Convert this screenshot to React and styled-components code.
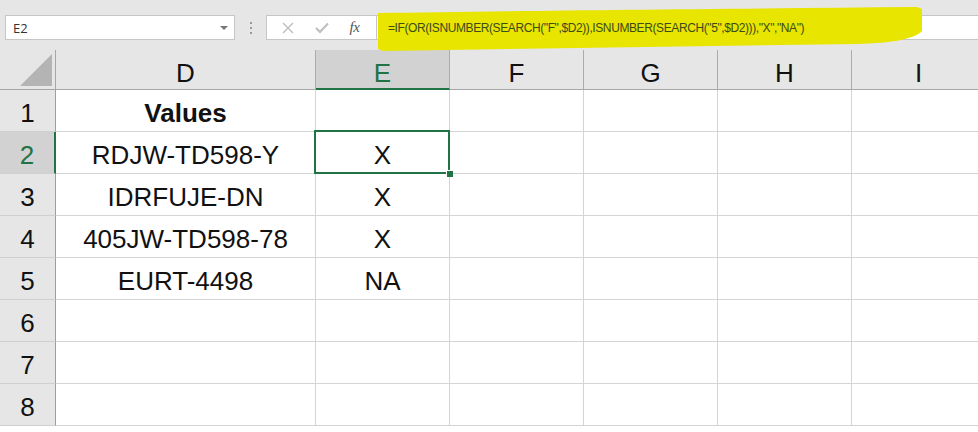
import React from "react";
import styled, { createGlobalStyle, css } from "styled-components";

const GREEN = "#217346";

const Global = createGlobalStyle`
  html, body { margin: 0; padding: 0; background: #fff; }
  body { font-family: "Liberation Sans", Arial, sans-serif; overflow: hidden; }
  * { box-sizing: border-box; }
`;

const Frame = styled.div`
  position: relative;
  width: 978px;
  height: 432px;
  overflow: hidden;
  background: #fff;
`;

const TopBar = styled.div`
  position: relative;
  z-index: 5;
  height: 50px;
  background: #e6e6e6;
  display: flex;
  align-items: flex-start;
  padding: 15px 0 0 5px;
`;

const NameBox = styled.div`
  width: 230px;
  height: 25px;
  background: #fff;
  border: 1px solid #c6c6c6;
  display: flex;
  align-items: center;
  justify-content: space-between;
  padding: 0 6px 0 7px;
  font-family: "Open Sans", "Noto Sans", sans-serif;
  font-size: 13px;
  color: #333;
`;

const Caret = styled.span`
  width: 0;
  height: 0;
  border-left: 4px solid transparent;
  border-right: 4px solid transparent;
  border-top: 4px solid #777;
`;

const Dots = styled.div`
  width: 31px;
  height: 25px;
  display: flex;
  flex-direction: column;
  align-items: center;
  justify-content: center;
  gap: 3px;
  & > span {
    width: 2px;
    height: 2px;
    background: #9a9a9a;
  }
`;

const FxBox = styled.div`
  width: 110px;
  height: 25px;
  background: #fff;
  border: 1px solid #c6c6c6;
  border-right: none;
  display: flex;
  align-items: center;
  justify-content: space-around;
  padding: 0 6px 0 4px;
`;

const FxLabel = styled.span`
  font-family: "Liberation Serif", "Times New Roman", serif;
  font-style: italic;
  font-size: 15px;
  color: #555;
  letter-spacing: -0.5px;
`;

const FormulaInput = styled.div`
  flex: 1;
  height: 25px;
  background: #fff;
  border-top: 1px solid #c6c6c6;
  border-bottom: 1px solid #c6c6c6;
  border-left: 1px solid #c6c6c6;
  display: flex;
  align-items: center;
  padding-left: 11px;
  font-family: "Liberation Sans", Arial, sans-serif;
  font-size: 12px;
  letter-spacing: -0.4px;
  color: #3d4a1a;
  white-space: nowrap;
  position: relative;
`;

const FormulaText = styled.span`
  position: relative;
  z-index: 2;
`;

const Highlight = styled.svg`
  position: absolute;
  left: 0;
  top: -16px;
  z-index: 1;
  pointer-events: none;
  overflow: visible;
`;

const Sheet = styled.div`
  display: grid;
  grid-template-columns: 56px 260px repeat(5, 134px);
  grid-template-rows: 40px repeat(8, 42px);
  width: 986px;
`;

const cellText = css`
  font-family: "Liberation Sans", Arial, sans-serif;
  font-size: 26px;
  line-height: 26px;
  display: flex;
  align-items: flex-end;
  justify-content: center;
`;

const Corner = styled.div`
  background: #e6e6e6;
  border-right: 1px solid #a6a6a6;
  border-bottom: 1px solid #a6a6a6;
  position: relative;
  &::after {
    content: "";
    position: absolute;
    right: 3px;
    bottom: 3px;
    width: 0;
    height: 0;
    border-left: 32px solid transparent;
    border-bottom: 32px solid #b4b4b4;
  }
`;

const ColHead = styled.div`
  ${cellText}
  background: ${(p) => (p.$active ? "#d2d2d2" : "#e6e6e6")};
  color: ${(p) => (p.$active ? GREEN : "#111")};
  border-right: 1px solid #ababab;
  border-bottom: ${(p) => (p.$active ? `2px solid ${GREEN}` : "1px solid #a6a6a6")};
  padding-bottom: ${(p) => (p.$active ? "2px" : "3px")};
`;

const RowHead = styled.div`
  ${cellText}
  padding-bottom: 5px;
  background: ${(p) => (p.$active ? "#d2d2d2" : "#e6e6e6")};
  color: ${(p) => (p.$active ? GREEN : "#111")};
  border-bottom: 1px solid #cfcfcf;
  border-right: ${(p) => (p.$active ? `2px solid ${GREEN}` : "1px solid #9e9e9e")};
`;

const Cell = styled.div`
  ${cellText}
  padding-bottom: 5px;
  color: #111;
  font-weight: ${(p) => (p.$bold ? 700 : 400)};
  border-right: 1px solid #d4d4d4;
  border-bottom: 1px solid #d4d4d4;
  position: relative;
  ${(p) =>
    p.$selected &&
    css`
      &::before {
        content: "";
        position: absolute;
        left: -2px;
        top: -2px;
        right: -1px;
        bottom: -1px;
        border: 2px solid ${GREEN};
        z-index: 2;
      }
      &::after {
        content: "";
        position: absolute;
        right: -4px;
        bottom: -4px;
        width: 6px;
        height: 6px;
        background: ${GREEN};
        border-left: 1px solid #fff;
        border-top: 1px solid #fff;
        box-sizing: content-box;
        z-index: 3;
      }
    `}
`;

const cols = ["D", "E", "F", "G", "H", "I"];
const data = [
  ["Values", ""],
  ["RDJW-TD598-Y", "X"],
  ["IDRFUJE-DN", "X"],
  ["405JW-TD598-78", "X"],
  ["EURT-4498", "NA"],
  ["", ""],
  ["", ""],
  ["", ""],
];

const formula = '=IF(OR(ISNUMBER(SEARCH("F",$D2)),ISNUMBER(SEARCH("5",$D2))),"X","NA")';

export default function App() {
  return (
    <Frame>
      <Global />
      <TopBar>
        <NameBox>
          <span>E2</span>
          <Caret />
        </NameBox>
        <Dots>
          <span />
          <span />
          <span />
        </Dots>
        <FxBox>
          <svg width="12" height="12" viewBox="0 0 12 12">
            <path d="M1 1 L11 11 M11 1 L1 11" stroke="#bdbdbd" strokeWidth="1.4" fill="none" />
          </svg>
          <svg width="14" height="12" viewBox="0 0 14 12">
            <path d="M1 6 L5 10 L13 1.5" stroke="#bdbdbd" strokeWidth="2" fill="none" />
          </svg>
          <FxLabel>fx</FxLabel>
        </FxBox>
        <FormulaInput>
          <Highlight width="560" height="52" viewBox="0 0 560 52">
            <path
              d="M1,13 C120,11 330,9 540,7 L545,9 L545,31 C538,39 515,43 480,44 L200,48 L6,51 L1,49 Z"
              fill="#e8e500"
            />
          </Highlight>
          <FormulaText>{formula}</FormulaText>
        </FormulaInput>
      </TopBar>
      <Sheet>
        <Corner />
        {cols.map((c) => (
          <ColHead key={c} $active={c === "E"}>
            {c}
          </ColHead>
        ))}
        {data.map((row, i) => (
          <React.Fragment key={i}>
            <RowHead $active={i === 1}>{i + 1}</RowHead>
            <Cell $bold={i === 0}>{row[0]}</Cell>
            <Cell $selected={i === 1}>{row[1]}</Cell>
            <Cell />
            <Cell />
            <Cell />
            <Cell />
          </React.Fragment>
        ))}
      </Sheet>
    </Frame>
  );
}
